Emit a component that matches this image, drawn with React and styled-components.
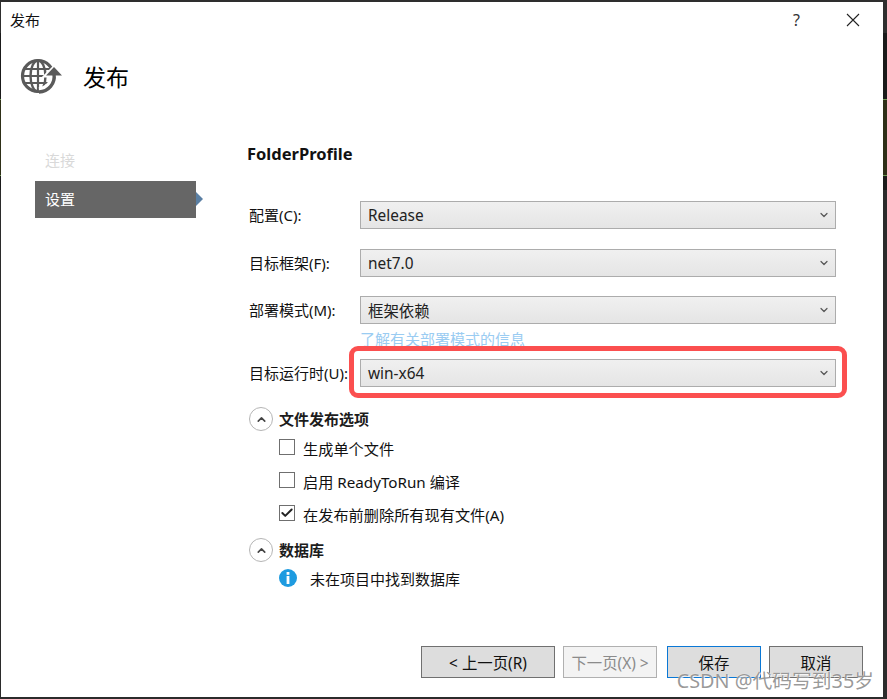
import React from 'react';
import styled, { createGlobalStyle } from 'styled-components';
import { ChevronDown, ChevronUp, Check } from 'lucide-react';

const cjk = `"Noto Sans", "Noto Sans CJK SC", sans-serif`;

const GlobalStyle = createGlobalStyle`
  html, body { margin: 0; padding: 0; background: #262626; }
  * { box-sizing: border-box; }
`;

const Screen = styled.div`
  position: relative;
  width: 887px;
  height: 699px;
  overflow: hidden;
  display: flex;
  padding: 2px 4px 2px 1px;
  background: linear-gradient(
    #2e2e2e 0 33px,
    #1a1a1a 33px 99px,
    #6f9a55 99px 100px,
    #2e2f17 100px 175px,
    #6f9a55 175px 176px,
    #1a1a1a 176px 190px,
    #2b2b2b 190px 100%
  );
  font-family: ${cjk};
  font-size: 15px;
  color: #111;
`;

const Dialog = styled.div`
  flex: 1;
  display: flex;
  flex-direction: column;
  background: #fff;
`;

const TitleBar = styled.div`
  height: 36px;
  display: flex;
  align-items: center;
  padding: 0 23px 0 9px;
`;

const TitleText = styled.span`
  flex: 1;
  margin-top: -1px;
  color: #111;
`;

const HelpMark = styled.span`
  margin-right: 46px;
  font-size: 16px;
  color: #333;
`;

const Header = styled.div`
  height: 77px;
  display: flex;
  align-items: center;
  gap: 21px;
  padding: 0 0 1px 18px;
`;

const HeaderTitle = styled.h1`
  margin: 0;
  font-size: 23px;
  font-weight: 400;
  color: #000;
`;

const Body = styled.div`
  flex: 1;
  display: flex;
`;

const Sidebar = styled.nav`
  width: 246px;
  padding: 27px 0 0 34px;
  display: flex;
  flex-direction: column;
`;

const NavItem = styled.div`
  position: relative;
  width: 161px;
  height: ${({ $active }) => ($active ? '37px' : '39px')};
  padding: 0 0 ${({ $active }) => ($active ? '2px' : '4px')} 10px;
  display: flex;
  align-items: center;
  font-size: 15px;
  color: ${({ $active }) => ($active ? '#fff' : '#d9d9d9')};
  background: ${({ $active }) => ($active ? '#666' : 'transparent')};

  ${({ $active }) => $active && `
    &::after {
      content: '';
      position: absolute;
      left: 100%;
      top: 11px;
      border-left: 7px solid #5a7fa3;
      border-top: 7px solid transparent;
      border-bottom: 7px solid transparent;
    }
  `}
`;

const Main = styled.main`
  flex: 1;
  padding: 27px 47px 0 0;
  display: flex;
  flex-direction: column;
`;

const ProfileName = styled.h2`
  margin: 0 0 35px;
  height: 24px;
  font-size: 16.5px;
  line-height: 24px;
  font-weight: 700;
  color: #111;
`;

const Field = styled.div`
  position: relative;
  display: flex;
  align-items: center;
  margin-top: ${({ $gap }) => $gap || 0}px;
  padding-left: 2px;
`;

const FieldLabel = styled.label`
  width: 111px;
  margin-top: -2px;
  white-space: nowrap;
  font-size: 15px;
`;

const Combo = styled.div`
  flex: 1;
  height: 28px;
  padding: 0 5px 0 7px;
  display: flex;
  align-items: center;
  justify-content: space-between;
  border: 1px solid #acacac;
  background: linear-gradient(#f0f0f0, #e5e5e5);
  font-size: 15.4px;
  color: #222;
`;

const Highlight = styled.div`
  position: absolute;
  left: 102px;
  right: -11px;
  top: -13px;
  bottom: -11px;
  border: 5px solid #fb4f4f;
  border-radius: 9px;
  pointer-events: none;
`;

const HelpLink = styled.a`
  height: 21px;
  margin-left: 113px;
  padding-top: 4px;
  font-size: 15px;
  line-height: 23px;
  color: #9accf2;
`;

const Section = styled.div`
  display: flex;
  align-items: center;
  gap: 6px;
  margin-top: ${({ $gap }) => $gap}px;
  padding-left: 2px;
`;

const SectionTitle = styled.span`
  margin-top: -2px;
  font-weight: 700;
  font-size: 15px;
  color: #1c1c1c;
`;

const Toggle = styled.span`
  width: 24px;
  height: 24px;
  display: flex;
  align-items: center;
  justify-content: center;
  border: 1.5px solid #b5b5b5;
  border-radius: 50%;
  color: #444;
`;

const CheckRow = styled.div`
  display: flex;
  align-items: center;
  gap: 8px;
  height: 24px;
  margin: ${({ $gap }) => $gap}px 0 0 32px;
  font-size: 15.2px;
`;

const Box = styled.span`
  width: 16px;
  height: 16px;
  margin-top: -2px;
  display: flex;
  align-items: center;
  justify-content: center;
  border: 1px solid #6f6f6f;
  color: #222;
`;

const InfoRow = styled.div`
  display: flex;
  align-items: center;
  gap: 13px;
  height: 22px;
  margin: 5px 0 0 32px;
`;

const Footer = styled.div`
  height: 68px;
  padding: 17px 20px 0 0;
  display: flex;
  justify-content: flex-end;
  align-items: flex-start;
`;

const Button = styled.div`
  width: ${({ $wide }) => ($wide ? '134px' : '94px')};
  height: 32px;
  margin-left: ${({ $gap }) => $gap || 0}px;
  display: flex;
  align-items: center;
  justify-content: center;
  border: 1.5px solid ${({ $primary, disabled }) => ($primary ? '#0a78d6' : disabled ? '#b0b0b0' : '#707070')};
  background: ${({ disabled }) => (disabled ? '#f3f3f3' : '#ddd')};
  color: ${({ disabled }) => (disabled ? '#8b8b8b' : '#111')};
  font-size: 15.4px;
`;

const Watermark = styled.span`
  position: absolute;
  right: 13px;
  bottom: 5px;
  font-size: 19.8px;
  color: rgba(120, 120, 120, 0.75);
  text-shadow: 0 0 1px #fff, 1px 1px 0 rgba(255, 255, 255, 0.7);
  white-space: nowrap;
`;

const GlobeIcon = () => (
  <svg width="43" height="36" viewBox="0 0 43 36" fill="none">
    <g stroke="#5a5a5a">
      <circle cx="19" cy="18" r="15.5" strokeWidth="3.2" />
      <ellipse cx="19" cy="18" rx="7.5" ry="15.5" strokeWidth="2.4" />
      <path d="M19 3v30M4 18h30M6 11h26M6 25h26" strokeWidth="2.2" />
    </g>
    <path d="M35 15a16 16 0 0 1-15 18" stroke="#fff" strokeWidth="8" />
    <path d="M35 9l-9 9h18z" fill="#fff" stroke="#fff" strokeWidth="3" />
    <path d="M35 16a15.5 15.5 0 0 1-15 18" stroke="#5a5a5a" strokeWidth="3.4" />
    <path d="M35 9l-8 8.5h16z" fill="#5a5a5a" />
  </svg>
);

const CloseIcon = () => (
  <svg width="14" height="14" viewBox="0 0 14 14">
    <path d="M1 1l12 12M13 1L1 13" stroke="#222" strokeWidth="1.1" />
  </svg>
);

const InfoIcon = () => (
  <svg width="18" height="18" viewBox="0 0 18 18">
    <circle cx="9" cy="9" r="9" fill="#1e9be0" />
    <rect x="7.6" y="3" width="2.8" height="2.8" fill="#fff" />
    <rect x="7.6" y="7" width="2.8" height="8" fill="#fff" />
  </svg>
);

const fields = [
  { label: '配置(C):', value: 'Release', gap: 0 },
  { label: '目标框架(F):', value: 'net7.0', gap: 20 },
  { label: '部署模式(M):', value: '框架依赖', gap: 19 },
];

export default function App() {
  return (
    <Screen>
      <GlobalStyle />
      <Dialog>
        <TitleBar>
          <TitleText>发布</TitleText>
          <HelpMark>?</HelpMark>
          <CloseIcon />
        </TitleBar>
        <Header>
          <GlobeIcon />
          <HeaderTitle>发布</HeaderTitle>
        </Header>
        <Body>
          <Sidebar>
            <NavItem>连接</NavItem>
            <NavItem $active>设置</NavItem>
          </Sidebar>
          <Main>
            <ProfileName>FolderProfile</ProfileName>
            {fields.map((f) => (
              <Field key={f.label} $gap={f.gap}>
                <FieldLabel>{f.label}</FieldLabel>
                <Combo>
                  {f.value}
                  <ChevronDown size={12} strokeWidth={2.4} color="#555" />
                </Combo>
              </Field>
            ))}
            <HelpLink>了解有关部署模式的信息</HelpLink>
            <Field $gap={14}>
              <FieldLabel>目标运行时(U):</FieldLabel>
              <Combo>
                win-x64
                <ChevronDown size={12} strokeWidth={2.4} color="#555" />
              </Combo>
              <Highlight />
            </Field>
            <Section $gap={20}>
              <Toggle><ChevronUp size={13} strokeWidth={3} /></Toggle>
              <SectionTitle>文件发布选项</SectionTitle>
            </Section>
            <CheckRow $gap={5}><Box />生成单个文件</CheckRow>
            <CheckRow $gap={9}><Box />启用 ReadyToRun 编译</CheckRow>
            <CheckRow $gap={9}><Box><Check size={14} strokeWidth={3.4} /></Box>在发布前删除所有现有文件(A)</CheckRow>
            <Section $gap={12}>
              <Toggle><ChevronUp size={13} strokeWidth={3} /></Toggle>
              <SectionTitle>数据库</SectionTitle>
            </Section>
            <InfoRow><InfoIcon />未在项目中找到数据库</InfoRow>
          </Main>
        </Body>
        <Footer>
          <Button $wide>&lt; 上一页(R)</Button>
          <Button $gap={8} disabled>下一页(X) &gt;</Button>
          <Button $gap={10} $primary>保存</Button>
          <Button $gap={8}>取消</Button>
        </Footer>
      </Dialog>
      <Watermark>CSDN @代码写到35岁</Watermark>
    </Screen>
  );
}
